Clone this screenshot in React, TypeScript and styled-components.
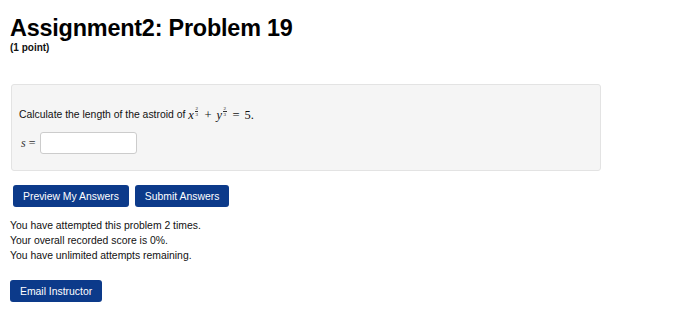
import styled, { createGlobalStyle } from 'styled-components';

const GlobalStyle = createGlobalStyle`
  body {
    margin: 0;
    background: #ffffff;
    font-family: 'Liberation Sans', Arial, sans-serif;
    color: #111111;
  }
`;

const Page = styled.div`
  padding: 14px 10px 0 10px;
`;

const Title = styled.h1`
  margin: 0;
  font-size: 23.4px;
  font-weight: bold;
  line-height: 28px;
  color: #000;
  letter-spacing: -0.2px;
`;

const Points = styled.div`
  font-size: 10px;
  font-weight: bold;
  line-height: 12px;
`;

const ProblemBox = styled.div`
  margin: 30px 0 0 1px;
  width: 590px;
  box-sizing: border-box;
  height: 87px;
  padding: 23px 7px 0 7px;
  background: #f5f5f5;
  border: 1px solid #e3e3e3;
  border-radius: 3px;
  font-size: 10.4px;
`;

const Statement = styled.div`
  line-height: 14px;
  display: flex;
  align-items: center;
`;

const Math = styled.span`
  font-family: 'Liberation Serif', 'Times New Roman', serif;
  font-size: 12.5px;
  display: inline-flex;
  align-items: center;
  margin-left: 3px;
`;

const Var = styled.i`
  font-style: italic;
`;

const Op = styled.span`
  margin: 0 5px;
`;

const Exp = styled.span`
  display: inline-flex;
  flex-direction: column;
  align-items: center;
  font-size: 5px;
  line-height: 5px;
  margin: -8px 1px 0 1px;
`;

const Num = styled.span<{ $bar?: boolean }>`
  border-bottom: ${({ $bar }) => ($bar ? '0.5px solid #333' : 'none')};
  padding: 0 0.5px;
`;

const AnswerRow = styled.div`
  display: flex;
  align-items: center;
  margin-top: 10px;
  gap: 5px;
`;

const AnswerLabel = styled.span`
  font-family: 'Liberation Serif', 'Times New Roman', serif;
  font-size: 12px;
  color: #333;
  margin-left: 2px;
`;

const AnswerInput = styled.input`
  width: 97px;
  height: 22px;
  box-sizing: border-box;
  border: 1px solid #cccccc;
  border-radius: 3px;
  background: #fff;
  outline: none;
`;

const ButtonRow = styled.div`
  display: flex;
  gap: 6px;
  margin: 14px 0 0 3px;
`;

const Button = styled.button`
  height: 22px;
  padding: 0 10px;
  background: #0c3a8a;
  color: #ffffff;
  border: none;
  border-radius: 3px;
  font-family: 'Liberation Sans', Arial, sans-serif;
  font-size: 10.4px;
  cursor: pointer;
`;

const Status = styled.div`
  margin-top: 11px;
  font-size: 10.4px;
  line-height: 15px;
  color: #111;
`;

const EmailRow = styled.div`
  margin-top: 17px;
`;

const App = () => (
  <>
    <GlobalStyle />
    <Page>
      <Title>Assignment2: Problem 19</Title>
      <Points>(1 point)</Points>

      <ProblemBox>
        <Statement>
          Calculate the length of the astroid of
          <Math>
            <Var>x</Var>
            <Exp><Num $bar>2</Num><Num>3</Num></Exp>
            <Op>+</Op>
            <Var>y</Var>
            <Exp><Num $bar>2</Num><Num>3</Num></Exp>
            <Op>=</Op>
            5.
          </Math>
        </Statement>
        <AnswerRow>
          <AnswerLabel><Var>s</Var> =</AnswerLabel>
          <AnswerInput type="text" />
        </AnswerRow>
      </ProblemBox>

      <ButtonRow>
        <Button>Preview My Answers</Button>
        <Button>Submit Answers</Button>
      </ButtonRow>

      <Status>
        You have attempted this problem 2 times.<br />
        Your overall recorded score is 0%.<br />
        You have unlimited attempts remaining.
      </Status>

      <EmailRow>
        <Button>Email Instructor</Button>
      </EmailRow>
    </Page>
  </>
);

export default App;
